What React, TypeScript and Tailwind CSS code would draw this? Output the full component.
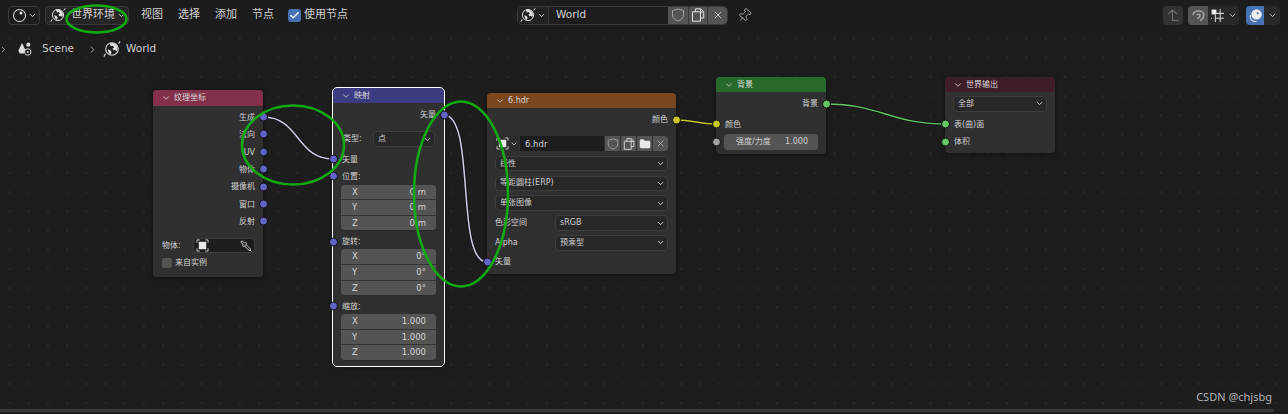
import React from "react";
import { ChevronDown, ChevronRight, Check, X, Pin, Folder, Pipette } from "lucide-react";

const font = "font-['DejaVu_Sans','Noto_Sans_CJK_SC',sans-serif]";

function Globe({ className = "" }: { className?: string }) {
  return (
    <svg viewBox="0 0 16 16" className={className} fill="none">
      <circle cx="8" cy="8" r="5.6" stroke="#d8d8d8" strokeWidth="1" />
      <path d="M6 3.2c2-1 5-.4 6.3 2 .9 1.7.7 3.6-.2 4.8l-1.4-1.2-1.5.4-.7-1.6 1.5-1.2-1.4-1.4-1.6.6L6 3.2ZM4.2 8.2l2.4.8 1 1.8-.8 2.2-1.6-1.4-1-3.4Z" fill="#e2e2e2" />
      <path d="M2 12.5 1 14.5M14 3l1-1.5" stroke="#d8d8d8" strokeWidth="1" strokeLinecap="round" />
    </svg>
  );
}

function EditorIcon() {
  return (
    <svg viewBox="0 0 16 16" className="w-[15px] h-[15px]" fill="none">
      <circle cx="8" cy="8" r="6.4" stroke="#e0e0e0" strokeWidth="1.1" />
      <circle cx="9.6" cy="5.4" r="1.6" fill="#e8e8e8" />
    </svg>
  );
}

function SceneIcon() {
  return (
    <svg viewBox="0 0 16 16" className="w-[16px] h-[16px]" fill="none">
      <path d="M5 2 8.2 8.4 7 12.5H2.6L1.4 9.4 5 2Z" fill="#dedede" />
      <circle cx="11.3" cy="3.7" r="2.1" fill="#dedede" />
      <circle cx="10.8" cy="11" r="3.2" stroke="#dedede" strokeWidth="1" />
      <circle cx="10.8" cy="11" r="1" fill="#dedede" />
    </svg>
  );
}

function ShieldIcon({ className = "" }: { className?: string }) {
  return (
    <svg viewBox="0 0 14 14" className={className} fill="none" stroke="#a4a4a4" strokeWidth="1">
      <path d="M7 1 12.5 2.6V7C12.5 10 10 12 7 13 4 12 1.5 10 1.5 7V2.6L7 1Z" />
    </svg>
  );
}

function CopyIcon({ className = "" }: { className?: string }) {
  return (
    <svg viewBox="0 0 14 14" className={className} fill="none" stroke="#e4e4e4" strokeWidth="1">
      <path d="M4.5 3.5V.8h5.2l3 3V10H9.5" />
      <path d="M9.5 1v3h3" />
      <path d="M1.5 3.8h8v9.4h-8z" />
    </svg>
  );
}

function ImageIcon() {
  return (
    <svg viewBox="0 0 14 14" className="w-[13px] h-[13px]" fill="none" stroke="#d0d0d0" strokeWidth="1">
      <path d="M1 4V1h3M10 1h3v3M13 10v3h-3M4 13H1v-3" />
      <rect x="3" y="3" width="8" height="8" fill="#e8e8e8" stroke="none" />
    </svg>
  );
}

function Socket({ side, color = "bg-[#6363c7]" }: { side: "l" | "r"; color?: string }) {
  return (
    <span
      className={`absolute top-1/2 -translate-y-1/2 w-[7px] h-[7px] rounded-full border border-[#111] box-content ${color} ${
        side === "l" ? "left-[-4.5px]" : "right-[-4.5px]"
      }`}
    />
  );
}

function Out({ label, color, h = "h-[17.4px]" }: { label: string; color?: string; h?: string }) {
  return (
    <div className={`relative flex items-center justify-end pr-[8px] ${h}`}>
      <span className="mt-[1.5px]">{label}</span>
      <Socket side="r" color={color} />
    </div>
  );
}

function In({ label, color, h = "h-[17.4px]", pl = "pl-[9px]" }: { label: string; color?: string; h?: string; pl?: string }) {
  return (
    <div className={`relative flex items-center ${pl} ${h}`}>
      <span className="mt-[1px]">{label}</span>
      <Socket side="l" color={color} />
    </div>
  );
}

function Drop({ label, className = "" }: { label: string; className?: string }) {
  return (
    <div className={`flex items-center justify-between rounded-[4px] bg-[#282828] border border-[#3d3d3d] pl-[4px] pr-[2px] h-[15.5px] ${className}`}>
      <span className="whitespace-nowrap">{label}</span>
      <ChevronDown className="w-[9px] h-[9px] shrink-0 text-[#d0d0d0]" strokeWidth={2.5} />
    </div>
  );
}

function Vec({ values }: { values: string[] }) {
  const axes = ["X", "Y", "Z"];
  return (
    <div className="mx-[8px] rounded-[4px] overflow-hidden flex flex-col gap-px bg-[#333] border-b border-[#2a2a2a]">
      {axes.map((a, i) => (
        <div key={a} className="flex items-center justify-between bg-[#545454] h-[14.6px] pl-[11px] pr-[10px] text-[#d4d4d4] text-[8.5px]">
          <span>{a}</span>
          <span>{values[i]}</span>
        </div>
      ))}
    </div>
  );
}

function Node({
  className,
  head,
  title,
  headH = "h-[16px]",
  children,
  selected,
}: {
  className: string;
  head: string;
  title: string;
  headH?: string;
  children: React.ReactNode;
  selected?: boolean;
}) {
  return (
    <div
      className={`absolute rounded-[4px] bg-[#303030] text-[#d0d0d0] text-[8px] leading-none shadow-[0_1px_5px_rgba(0,0,0,0.5)] ${
        selected ? "outline outline-1 outline-white" : ""
      } ${className}`}
    >
      <div className={`flex items-center gap-[3px] pl-[8px] rounded-t-[4px] ${headH} ${head}`}>
        <ChevronDown className="w-[10px] h-[10px] text-[#d0d0d0]" strokeWidth={2} />
        <span className="text-[#d8d8d8] text-[8px]">{title}</span>
      </div>
      {children}
    </div>
  );
}

function IconBtn({ children, className = "" }: { children: React.ReactNode; className?: string }) {
  return <div className={`flex items-center justify-center bg-[#545454] ${className}`}>{children}</div>;
}

export default function App() {
  return (
    <div className={`relative w-[1288px] h-[414px] overflow-hidden bg-[#1d1d1d] text-[#d2d2d2] ${font}`}>
      {/* dotted grid */}
      <div className="absolute inset-0 top-[29px] bg-[radial-gradient(circle,#2a2a2a_0.8px,transparent_1px)] bg-[size:19.2px_19.2px]" />

      {/* top bar */}
      <div className="relative h-[29px] pt-[1px] bg-[#1c1c1c] flex items-center pl-[8px] pr-[8px] text-[11px]">
        <div className="flex items-center justify-center gap-[1px] w-[32px] h-[19px] rounded-[4px] border border-[#3a3a3a] bg-[#1d1d1d]">
          <EditorIcon />
          <ChevronDown className="w-[9px] h-[9px]" strokeWidth={2.5} />
        </div>
        <div className="ml-[5px] flex items-center gap-[5px] pl-[4px] w-[84px] h-[19px] rounded-[4px] border border-[#3a3a3a] bg-[#262626]">
          <Globe className="w-[16px] h-[16px]" />
          <span>世界环境</span>
          <ChevronDown className="w-[9px] h-[9px] ml-[-3px]" strokeWidth={2.5} />
        </div>
        <div className="ml-[12px] flex gap-[15px]">
          <span>视图</span>
          <span>选择</span>
          <span>添加</span>
          <span>节点</span>
        </div>
        <div className="ml-[14px] flex items-center justify-center w-[13px] h-[13px] rounded-[3px] bg-[#4772b3]">
          <Check className="w-[11px] h-[11px] text-white" strokeWidth={3} />
        </div>
        <span className="ml-[3px]">使用节点</span>

        <div className="ml-[169px] flex items-center h-[19px] w-[211px] rounded-[5px] overflow-hidden border border-[#3a3a3a] text-[10.5px]">
          <div className="flex items-center justify-center gap-[1px] w-[31px] h-full bg-[#222] border-r border-[#3a3a3a]">
            <Globe className="w-[16px] h-[16px]" />
            <ChevronDown className="w-[9px] h-[9px]" strokeWidth={2.5} />
          </div>
          <div className="flex-1 h-full flex items-center pl-[7px] bg-[#1d1d1d]">World</div>
          <IconBtn className="w-[20px] h-full"><ShieldIcon className="w-[14px] h-[14px]" /></IconBtn>
          <IconBtn className="w-[20px] h-full border-x border-[#3a3a3a]"><CopyIcon className="w-[14px] h-[14px]" /></IconBtn>
          <IconBtn className="w-[19px] h-full"><X className="w-[12px] h-[12px] text-[#e0e0e0]" strokeWidth={1.6} /></IconBtn>
        </div>
        <Pin className="ml-[9px] w-[15px] h-[15px] rotate-[40deg] text-[#b8b8b8]" strokeWidth={1.3} />

        <div className="ml-auto flex items-center">
          <div className="flex items-center justify-center w-[20px] h-[19px] rounded-[4px] bg-[#333]">
            <svg viewBox="0 0 14 14" className="w-[15px] h-[15px]" fill="none" stroke="#6e6e6e" strokeWidth="1.1">
              <path d="M2 5.5 6 2l4 3.5M6 2v9.5h6" />
            </svg>
          </div>
          <div className="ml-[5px] flex items-center h-[19px] w-[51px] rounded-[4px] overflow-hidden bg-[#282828]">
            <div className="flex items-center justify-center w-[20px] h-full bg-[#545454]">
              <svg viewBox="0 0 14 14" className="w-[15px] h-[15px]" fill="none" stroke="#a0a0a0" strokeWidth="1.5">
                <path d="M2 6.5C2 1.5 12 1.5 12 6.5c0 2.5-1.5 4-3.5 5.5M5.5 6.5c1-1 3-1 3 .5 0 1-1 2-2.5 3" />
              </svg>
            </div>
            <div className="flex-1 flex items-center justify-center gap-[3px]">
              <svg viewBox="0 0 14 14" className="w-[15px] h-[15px]" fill="none" stroke="#d4d4d4" strokeWidth="1">
                <path d="M5 9.5h8M1 9.5h1M5 5h8M9.5 1v12M5 6v7" />
                <rect x="1.5" y="1.5" width="4.5" height="4.5" fill="#eee" stroke="none" />
              </svg>
              <ChevronDown className="w-[9px] h-[9px]" strokeWidth={2.5} />
            </div>
          </div>
          <div className="ml-[7px] flex items-center h-[19px] w-[34px] rounded-[4px] overflow-hidden bg-[#282828]">
            <div className="flex items-center justify-center w-[18px] h-full bg-[#4772b3]">
              <svg viewBox="0 0 14 14" className="w-[15px] h-[15px]" fill="none">
                <circle cx="8" cy="6" r="4.8" fill="#eee" />
                <circle cx="9" cy="5" r="1" fill="#4772b3" />
                <path d="M2.5 6.5C1 10 4 13 8 12.6" stroke="#eee" strokeWidth="1" />
              </svg>
            </div>
            <div className="flex-1 flex items-center justify-center">
              <ChevronDown className="w-[9px] h-[9px]" strokeWidth={2.5} />
            </div>
          </div>
        </div>
      </div>

      {/* breadcrumbs */}
      <div className="relative flex items-center h-[40px] text-[10.5px] text-[#cccccc]">
        <ChevronRight className="ml-[-1px] w-[9px] h-[9px]" strokeWidth={2} />
        <div className="ml-[9px]"><SceneIcon /></div>
        <span className="ml-[9px]">Scene</span>
        <ChevronRight className="ml-[13px] w-[11px] h-[11px]" strokeWidth={1.6} />
        <Globe className="ml-[5px] w-[18px] h-[18px]" />
        <span className="ml-[5px]">World</span>
      </div>

      {/* links */}
      <svg className="absolute inset-0 w-[1288px] h-[414px]" viewBox="0 0 1288 414" fill="none">
        <path d="M263 117C300 117 296 159 333 159" stroke="#111" strokeWidth="3" />
        <path d="M263 117C300 117 296 159 333 159" stroke="#cdcdea" strokeWidth="1.5" />
        <path d="M444 115C476 115 455 262 487 262" stroke="#111" strokeWidth="3" />
        <path d="M444 115C476 115 455 262 487 262" stroke="#cdcdea" strokeWidth="1.5" />
        <path d="M676 120C695 120 697 124 716 124" stroke="#111" strokeWidth="3" />
        <path d="M676 120C695 120 697 124 716 124" stroke="#c7c729" strokeWidth="1.5" />
        <path d="M826 104C880 104 891 124 945 124" stroke="#111" strokeWidth="3" />
        <path d="M826 104C880 104 891 124 945 124" stroke="#63c763" strokeWidth="1.5" />
      </svg>

      {/* 纹理坐标 */}
      <Node className="left-[153px] top-[90px] w-[110px] h-[187px]" head="bg-[#83314a]" title="纹理坐标">
        <div className="pt-[2.4px]">
          <Out label="生成" />
          <Out label="法向" />
          <Out label="UV" />
          <Out label="物体" />
          <Out label="摄像机" />
          <Out label="窗口" />
          <Out label="反射" />
        </div>
        <div className="flex items-center mt-[8px] pl-[9px] pr-[8px]">
          <span className="w-[31px]">物体:</span>
          <div className="flex-1 flex items-center justify-between h-[15px] rounded-[4px] bg-[#1d1d1d] border border-[#3d3d3d] px-[2px]">
            <ImageIcon />
            <Pipette className="w-[12px] h-[12px] text-[#d0d0d0] -scale-x-100" strokeWidth={2} />
          </div>
        </div>
        <div className="flex items-center gap-[3px] mt-[5px] pl-[9px]">
          <span className="w-[10px] h-[10px] rounded-[2px] bg-[#545454]" />
          <span>来自实例</span>
        </div>
      </Node>

      {/* 映射 */}
      <Node selected className="left-[333px] top-[88px] w-[111px] h-[278px]" head="bg-[#3c3c83]" headH="h-[15px]" title="映射">
        <div className="pt-[3px]">
          <Out label="矢量" />
        </div>
        <div className="flex items-center mt-[8px] pl-[9px] pr-[9px]">
          <span className="w-[31px] ml-[1px] mr-[-1px]">类型:</span>
          <Drop label="点" className="flex-1 bg-[#1f1f1f]" />
        </div>
        <div className="mt-[3.5px]">
          <In label="矢量" />
          <In label="位置:" />
        </div>
        <div className="mt-[-0.5px]"><Vec values={["0 m", "0 m", "0 m"]} /></div>
        <div className="mt-[1.5px]"><In label="旋转:" /></div>
        <div className="mt-[-1px]"><Vec values={["0°", "0°", "0°"]} /></div>
        <div className="mt-[1.5px]"><In label="缩放:" /></div>
        <div className="mt-[-1px]"><Vec values={["1.000", "1.000", "1.000"]} /></div>
      </Node>

      {/* 6.hdr */}
      <Node className="left-[487px] top-[93px] w-[189px] h-[181px]" head="bg-[#79461d]" title="6.hdr" headH="h-[15px]">
        <div className="pt-[3px]">
          <Out label="颜色" color="bg-[#c7c729]" />
        </div>
        <div className="mt-[8px] mx-[8px] flex items-center h-[15px] rounded-[4px] overflow-hidden gap-px text-[8.5px]">
          <div className="flex items-center justify-center gap-[1px] w-[24px] h-full bg-[#2c2c2c]">
            <ImageIcon />
            <ChevronDown className="w-[8px] h-[8px]" strokeWidth={2.5} />
          </div>
          <div className="flex-1 h-full flex items-center pl-[5px] bg-[#1d1d1d]">6.hdr</div>
          <IconBtn className="w-[15px] h-full"><ShieldIcon className="w-[12px] h-[12px]" /></IconBtn>
          <IconBtn className="w-[15px] h-full"><CopyIcon className="w-[12px] h-[12px]" /></IconBtn>
          <IconBtn className="w-[15px] h-full"><Folder className="w-[12px] h-[12px] text-[#e8e8e8] fill-[#e8e8e8]" strokeWidth={1} /></IconBtn>
          <IconBtn className="w-[15px] h-full"><X className="w-[11px] h-[11px] text-[#c0c0c0]" strokeWidth={1.6} /></IconBtn>
        </div>
        <div className="mx-[8px] mt-[4.5px] flex flex-col gap-[4.3px]">
          <Drop label="线性" />
          <Drop label="等距圆柱(ERP)" />
          <Drop label="单张图像" />
          <div className="flex items-center">
            <span className="w-[60px]">色彩空间</span>
            <Drop label="sRGB" className="flex-1" />
          </div>
          <div className="flex items-center">
            <span className="w-[60px]">Alpha</span>
            <Drop label="预乘型" className="flex-1" />
          </div>
        </div>
        <div className="mt-[2.5px]">
          <In label="矢量" pl="pl-[8px]" />
        </div>
      </Node>

      {/* 背景 */}
      <Node className="left-[716px] top-[77px] w-[110px] h-[77px]" head="bg-[#276a2b]" title="背景" headH="h-[15px]">
        <div className="pt-[3px]">
          <Out label="背景" color="bg-[#63c763]" />
        </div>
        <div className="mt-[3px]">
          <In label="颜色" color="bg-[#c7c729]" />
        </div>
        <div className="relative mt-[1px] h-[16px] mx-[8px] flex items-center justify-between rounded-[4px] bg-[#545454] pl-[12px] pr-[10px]">
          <span>强度/力度</span>
          <span>1.000</span>
          <span className="absolute left-[-12.5px] top-1/2 -translate-y-1/2 w-[7px] h-[7px] rounded-full box-content border border-[#111] bg-[#a1a1a1]" />
        </div>
      </Node>

      {/* 世界输出 */}
      <Node className="left-[945px] top-[77px] w-[110px] h-[76px]" head="bg-[#3f1d28]" title="世界输出" headH="h-[15px]">
        <div className="mx-[8px] mt-[4px]">
          <Drop label="全部" className="bg-[#282828]" />
        </div>
        <div className="mt-[4px]">
          <In label="表(曲)面" color="bg-[#63c763]" />
          <In label="体积" color="bg-[#63c763]" />
        </div>
      </Node>

      {/* green annotations */}
      <svg className="absolute inset-0 w-[1288px] h-[414px] pointer-events-none" viewBox="0 0 1288 414" fill="none" stroke="#11a811" strokeWidth="2.6">
        <ellipse cx="96.5" cy="19" rx="30" ry="13.5" />
        <ellipse cx="293" cy="145" rx="51" ry="39.5" />
        <ellipse cx="461" cy="194" rx="47" ry="92.5" />
      </svg>

      {/* watermark */}
      <span className="absolute right-[16px] top-[389px] text-[11px] text-[#b4b4b4] font-['Noto_Sans',sans-serif]">CSDN @chjsbg</span>

      {/* scrollbar */}
      <div className="absolute left-0 bottom-[2px] w-[1274px] h-[3px] bg-[#3a3a3a]" />
    </div>
  );
}
